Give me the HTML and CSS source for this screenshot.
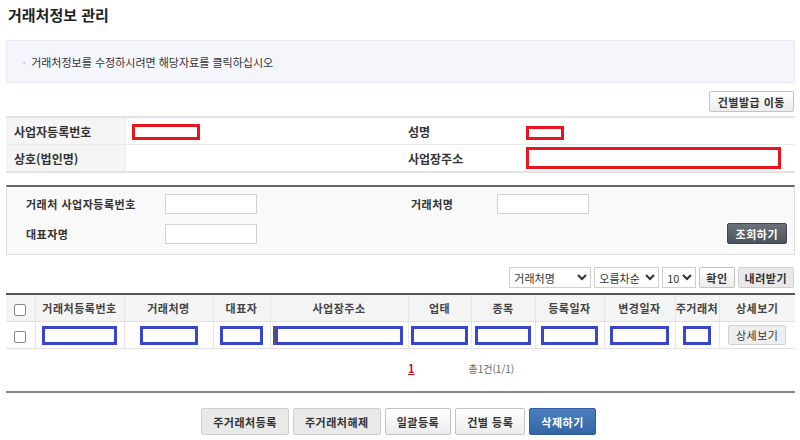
FILE: index.html
```html
<!DOCTYPE html>
<html lang="ko">
<head>
    <meta charset="UTF-8">
    <meta name="viewport" content="width=device-width, initial-scale=1.0">
    <title>거래처정보 관리</title>
    <link rel="stylesheet" href="styles.css">
</head>
<body>
    <div class="wrap">
        <h2 class="page-title">거래처정보 관리</h2>

        <!-- 안내문 -->
        <div class="notice">
            <p><span class="dot">ㆍ</span>거래처정보를 수정하시려면 해당자료를 클릭하십시오</p>
        </div>

        <div class="btn-row right">
            <button class="btn">건별발급 이동</button>
        </div>

        <!-- 사업자 정보 -->
        <table class="info-table">
            <colgroup>
                <col style="width: 119px">
                <col style="width: 275px">
                <col style="width: 120px">
                <col>
            </colgroup>
            <tr>
                <th>사업자등록번호</th>
                <td><span class="mask red" style="width: 62px"></span></td>
                <th>성명</th>
                <td><span class="mask red" style="width: 32px; height: 8px"></span></td>
            </tr>
            <tr>
                <th>상호(법인명)</th>
                <td></td>
                <th>사업장주소</th>
                <td><span class="mask red wide" style="width: 249px"></span></td>
            </tr>
        </table>

        <!-- 검색 영역 -->
        <div class="search-box">
            <div class="search-row">
                <label class="s-label">거래처 사업자등록번호</label>
                <input type="text" class="s-input">
                <label class="s-label second">거래처명</label>
                <input type="text" class="s-input">
            </div>
            <div class="search-row">
                <label class="s-label">대표자명</label>
                <input type="text" class="s-input">
                <button class="btn dark">조회하기</button>
            </div>
        </div>

        <div class="list-opts">
            <select class="sel" style="width: 82px">
                <option>거래처명</option>
            </select>
            <select class="sel" style="width: 65px">
                <option>오름차순</option>
            </select>
            <select class="sel" style="width: 34px">
                <option>10</option>
            </select>
            <button class="btn small">확인</button>
            <button class="btn small grey">내려받기</button>
        </div>

        <!-- 거래처 목록 -->
        <table class="list-table">
            <colgroup>
                <col style="width: 29px">
                <col style="width: 89px">
                <col style="width: 89px">
                <col style="width: 57px">
                <col style="width: 138px">
                <col style="width: 63px">
                <col style="width: 64px">
                <col style="width: 69px">
                <col style="width: 71px">
                <col style="width: 44px">
                <col>
            </colgroup>
            <thead>
                <tr>
                    <th><input type="checkbox" class="chk"></th>
                    <th>거래처등록번호</th>
                    <th>거래처명</th>
                    <th>대표자</th>
                    <th>사업장주소</th>
                    <th>업태</th>
                    <th>종목</th>
                    <th>등록일자</th>
                    <th>변경일자</th>
                    <th>주거래처</th>
                    <th>상세보기</th>
                </tr>
            </thead>
            <tbody>
                <tr>
                    <td><input type="checkbox" class="chk"></td>
                    <td><span class="mask blue" style="width: 75px"></span></td>
                    <td><span class="mask blue" style="width: 58px"></span></td>
                    <td><span class="mask blue" style="width: 43px"></span></td>
                    <td><span class="mask blue addr" style="width: 128px"></span></td>
                    <td><span class="mask blue" style="width: 57px"></span></td>
                    <td><span class="mask blue" style="width: 56px"></span></td>
                    <td><span class="mask blue" style="width: 57px"></span></td>
                    <td><span class="mask blue" style="width: 59px"></span></td>
                    <td><span class="mask blue" style="width: 28px"></span></td>
                    <td><button class="btn detail">상세보기</button></td>
                </tr>
            </tbody>
        </table>

        <div class="paging">
            <a href="#" class="cur">1</a>
            <span class="total">총1건(1/1)</span>
        </div>

        <div class="bottom-btns">
            <button class="btn grey big">주거래처등록</button>
            <button class="btn grey big">주거래처해제</button>
            <button class="btn big">일괄등록</button>
            <button class="btn big">건별 등록</button>
            <button class="btn blue big">삭제하기</button>
        </div>
    </div>
</body>
</html>
```

FILE: styles.css
```css
/* 기본 */
body {
    margin: 0;
    font-family: "Noto Sans CJK KR", "Noto Sans", sans-serif;
    font-size: 12px;
    color: #333;
    background: #fff;
}

.wrap {
    width: 789px;
    margin-left: 6px;
}

.page-title {
    margin: 0;
    padding: 4px 0 0 2px;
    height: 36px;
    font-size: 15px;
    font-weight: bold;
    color: #222;
    line-height: 22px;
}

/* 안내문 박스 */
.notice {
    height: 41px;
    background: #f4f6fb;
    border: 1px solid #e6e9f1;
    display: flex;
    align-items: center;
}

.notice p {
    margin: 0;
    padding-left: 12px;
    font-size: 11px;
    color: #333;
}

.notice .dot {
    color: #999;
    margin-right: 2px;
}

.btn-row {
    display: flex;
    padding: 8px 1px 4px 0;
}

.btn-row.right {
    justify-content: flex-end;
}

/* 버튼 */
.btn {
    font-family: inherit;
    font-size: 11px;
    font-weight: bold;
    color: #333;
    height: 21px;
    padding: 0 8px;
    border: 1px solid #c3c3c3;
    border-radius: 2px;
    background: linear-gradient(#ffffff, #ececec);
    cursor: pointer;
    letter-spacing: 0.5px;
}

.btn.dark {
    margin-left: auto;
    margin-right: 7px;
    height: 21px;
    color: #fff;
    border-color: #40464f;
    background: linear-gradient(#6b717a, #4d535c);
}

.btn.small {
    height: 21px;
    padding: 0 6px;
}

.btn.grey {
    background: #e9e9e9;
    border-color: #cfcfcf;
}

.btn.big {
    height: 27px;
    padding: 0 11px;
    font-size: 11px;
}

.btn.blue {
    color: #fff;
    border-color: #2f5d9a;
    background: linear-gradient(#4a7fc0, #3466a6);
}

.btn.detail {
    height: 20px;
    width: 58px;
    padding: 0;
    font-weight: normal;
    background: #eee;
    border-color: #d0d0d0;
}

/* 사업자 정보 테이블 */
.info-table {
    width: 100%;
    border-collapse: collapse;
    border-top: 2px solid #e2e2e2;
    border-bottom: 2px solid #e2e2e2;
}

.info-table th,
.info-table td {
    height: 26px;
    padding: 0;
    border-bottom: 1px solid #ebebeb;
    text-align: left;
}

.info-table th {
    background: #f5f5f5;
    padding-left: 8px;
    font-weight: bold;
    color: #333;
    border-right: 1px solid #ebebeb;
}

.info-table td {
    padding-left: 6px;
}

.info-table td + th {
    background: #fff;
    border-right: 0;
}

/* 가림 상자 */
.mask {
    display: inline-block;
    vertical-align: middle;
    height: 10px;
    background: #fff;
}

.mask.red {
    border: 3px solid #e8141e;
}

.mask.red.wide {
    height: 16px;
}

.mask.blue {
    box-sizing: border-box;
    height: 19px;
    border: 3px solid #3b44cd;
}

.mask.addr {
    box-shadow: -2px 0 0 #555;
}

/* 검색 영역 */
.search-box {
    margin-top: 12px;
    height: 60px;
    padding: 7px 0 0;
    background: #f9f9f9;
    border: 1px solid #dcdcdc;
    border-top: 2px solid #666;
    display: flex;
    flex-direction: column;
    gap: 9px;
}

.search-row {
    display: flex;
    align-items: center;
}

.s-label {
    width: 158px;
    padding-left: 19px;
    box-sizing: border-box;
    font-weight: bold;
    color: #333;
    font-size: 11px;
    letter-spacing: 0.5px;
}

.s-label.second {
    margin-left: 154px;
    width: 86px;
    padding-left: 0;
}

.s-input {
    width: 92px;
    height: 20px;
    box-sizing: border-box;
    border: 1px solid #d2d2d2;
    background: #fff;
    padding: 0 3px;
}

/* 목록 옵션 */
.list-opts {
    display: flex;
    justify-content: flex-end;
    gap: 3px;
    padding: 12px 1px 5px 0;
}

.sel {
    height: 21px;
    font-family: inherit;
    font-size: 11px;
    color: #333;
    border: 1px solid #cfcfcf;
    background: #fff;
    padding: 0;
}

/* 거래처 목록 */
.list-table {
    width: 100%;
    border-collapse: collapse;
    table-layout: fixed;
    border-top: 2px solid #555;
}

.list-table th,
.list-table td {
    height: 26px;
    padding: 0;
    text-align: center;
    border-left: 1px solid #e6e6e6;
    border-bottom: 1px solid #e0e0e0;
}

.list-table th:first-child,
.list-table td:first-child {
    border-left: 0;
}

.list-table th {
    background: #f5f4f4;
    font-size: 11px;
    font-weight: bold;
    color: #444;
    letter-spacing: 0.5px;
}

.chk {
    appearance: none;
    margin: 0;
    width: 12px;
    height: 12px;
    border: 1px solid #888;
    border-radius: 2px;
    background: #fff;
    vertical-align: middle;
}

/* 페이징 */
.paging {
    display: flex;
    align-items: center;
    gap: 54px;
    height: 38px;
    padding: 0 0 4px 402px;
    border-bottom: 2px solid #888;
}

.paging .cur {
    color: #c8102e;
    font-weight: bold;
    font-size: 11px;
    text-decoration: underline;
}

.paging .total {
    color: #666;
    font-size: 10px;
}

.bottom-btns {
    display: flex;
    justify-content: center;
    gap: 4px;
    padding-top: 15px;
    padding-right: 4px;
}
```
